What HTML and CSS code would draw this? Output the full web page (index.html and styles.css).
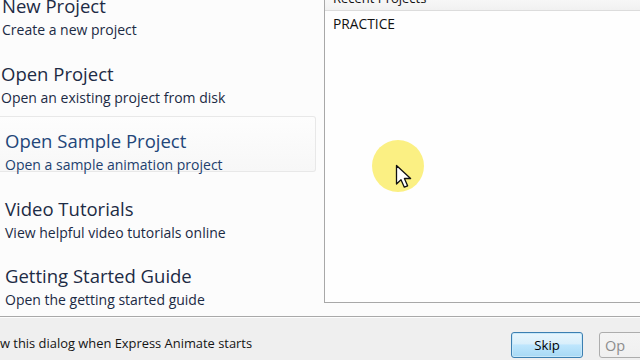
FILE: index.html
```html
<!DOCTYPE html>
<html lang="en">
<head>
  <meta charset="UTF-8">
  <meta name="viewport" content="width=device-width, initial-scale=1.0">
  <title>Welcome - Express Animate</title>
  <link rel="stylesheet" href="styles.css">
</head>
<body>
  <div class="dialog">
    <div class="main">
      <div class="tasks">
        <div class="task shift">
          <div class="task-title">New Project</div>
          <div class="task-desc">Create a new project</div>
        </div>
        <div class="task shift">
          <div class="task-title">Open Project</div>
          <div class="task-desc">Open an existing project from disk</div>
        </div>
        <div class="task hover">
          <div class="task-title">Open Sample Project</div>
          <div class="task-desc">Open a sample animation project</div>
        </div>
        <div class="task">
          <div class="task-title">Video Tutorials</div>
          <div class="task-desc">View helpful video tutorials online</div>
        </div>
        <div class="task">
          <div class="task-title">Getting Started Guide</div>
          <div class="task-desc">Open the getting started guide</div>
        </div>
      </div>

      <div class="recent">
        <div class="recent-head">Recent Projects</div>
        <div class="recent-list">
          <div class="recent-item">PRACTICE</div>
        </div>
      </div>
    </div>

    <div class="footer">
      <div class="show-label">w this dialog when Express Animate starts</div>
      <div class="buttons">
        <button class="btn default">Skip</button>
        <button class="btn disabled">Op</button>
      </div>
    </div>

    <!-- cursor highlight from the screen recorder -->
    <div class="cursor">
      <svg width="20" height="26" viewBox="0 0 20 26">
        <path d="M1.5 1.5 L1.5 20 L6 15.8 L9.3 23.2 L12.6 21.8 L9.4 14.5 L15.6 14.5 Z" fill="#fff" stroke="#111" stroke-width="1.3" stroke-linejoin="round"/>
      </svg>
    </div>
  </div>
</body>
</html>
```

FILE: styles.css
```css
body {
  margin: 0;
  padding: 0;
  background-color: #fcfcfc;
  font-family: "Open Sans", "Noto Sans", sans-serif;
}
.dialog {
  position: relative;
  width: 640px;
  height: 360px;
  overflow: hidden;
  background-color: #fcfcfc;
}
.main {
  display: flex;
  height: 316px;
  border-bottom: 1px solid #a9a9a9;
}
.tasks {
  width: 316px;
  margin-right: 8px;
  margin-top: -19px;
  display: flex;
  flex-direction: column;
  gap: 11.5px;
}
.task {
  height: 56px;
  box-sizing: border-box;
  padding: 13px 0 0 5px;
  border: 1px solid transparent;
  border-left: none;
}
.task.shift {
  padding-left: 1px;
}
.task:first-child {
  padding-left: 2px;
}
.task.hover {
  border-color: #e8e8e8;
  border-radius: 0 3px 3px 0;
  background: linear-gradient(#fdfdfd, #f7f7f7);
}
.task-title {
  font-size: 18.5px;
  line-height: 24px;
  color: #1d2b45;
  margin-top: -1px;
}
.task.hover .task-title {
  color: #234679;
}
.task-desc {
  font-size: 14px;
  line-height: 20px;
  margin-top: 2px;
  color: #1b2a44;
}
.task.hover .task-desc {
  color: #223f6e;
}
.recent {
  flex: 1;
  margin-top: -14px;
  margin-right: -10px;
  height: 315px;
  border: 1px solid #a8a8a8;
  background-color: #fefefe;
  display: flex;
  flex-direction: column;
}
.recent-head {
  height: 24px;
  box-sizing: border-box;
  padding: 2px 8px;
  font-size: 13px;
  color: #111;
  background: linear-gradient(#ffffff, #f1f1f1);
  border-bottom: 1px solid #dcdcdc;
}
.recent-list {
  padding: 4px 8px;
}
.recent-item {
  font-size: 13.8px;
  line-height: 18px;
  color: #111;
}
.footer {
  height: 43px;
  border-top: 1px solid #fdfdfd;
  background-color: #efefef;
  display: flex;
  align-items: center;
  justify-content: space-between;
}
.show-label {
  font-size: 12.9px;
  color: #141414;
  margin-top: 6px;
}
.buttons {
  display: flex;
  gap: 16px;
  margin-top: 11px;
  margin-right: -14px;
}
.btn {
  width: 72px;
  height: 26px;
  box-sizing: border-box;
  font-family: "Open Sans", "Noto Sans", sans-serif;
  font-size: 13.2px;
  border-radius: 3px;
  padding: 0;
}
.btn.default {
  color: #000;
  border: 1px solid #3c7fb1;
  background: linear-gradient(#e9f6fd 0%, #d9effb 45%, #bee6fd 50%, #a7d9f5 100%);
  box-shadow: inset 0 0 0 1px #c8e8f9;
}
.btn.disabled {
  width: 55px;
  text-align: left;
  padding-left: 5px;
  font-size: 14.5px;
  color: #8d8d8d;
  border: 1px solid #adadad;
  background: linear-gradient(#f4f4f4, #f0f0f0);
}
.cursor {
  position: absolute;
  left: 372px;
  top: 140px;
  width: 52px;
  height: 52px;
  border-radius: 50%;
  background-color: rgba(251, 238, 118, 0.9);
}
.cursor svg {
  position: absolute;
  left: 23px;
  top: 24px;
}
```
